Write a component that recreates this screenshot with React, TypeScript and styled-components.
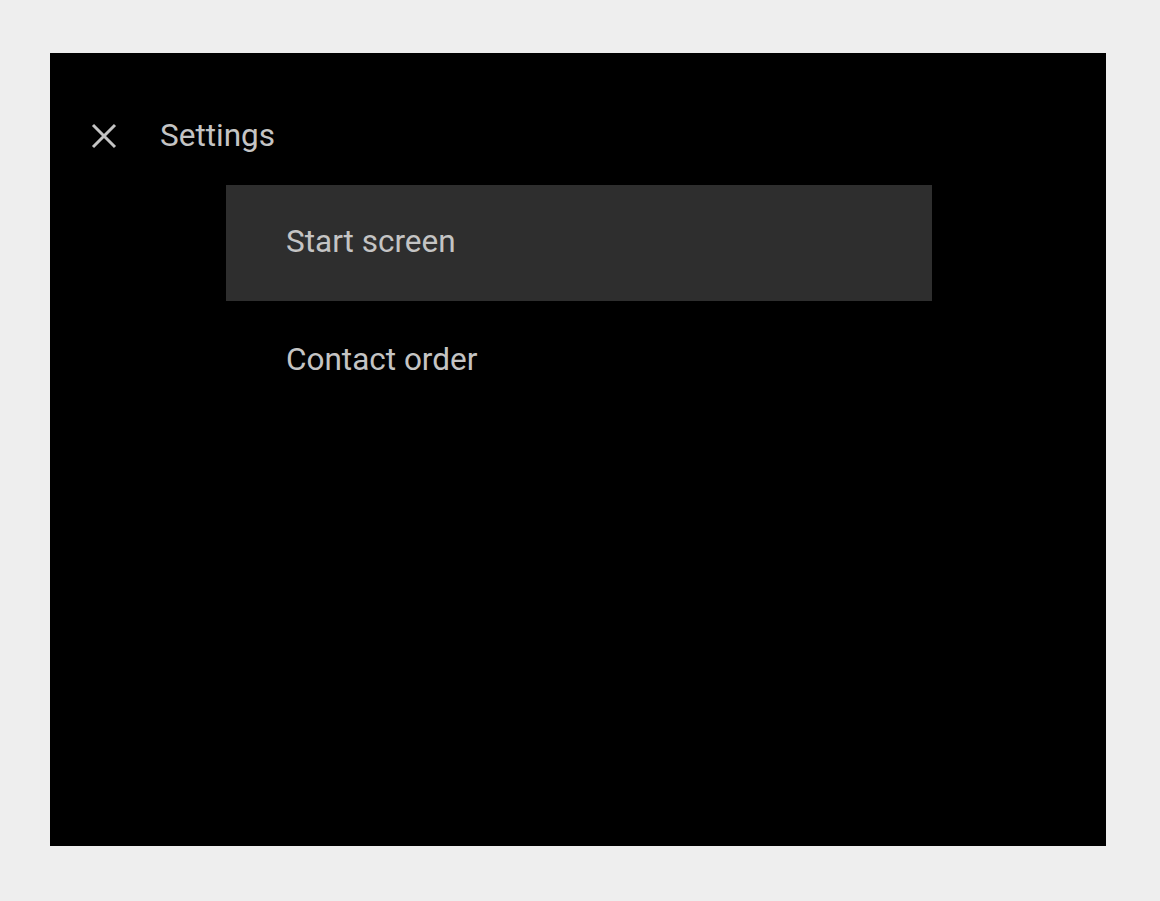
import React from 'react';
import styled, { createGlobalStyle } from 'styled-components';

const GlobalStyle = createGlobalStyle`
  body {
    margin: 0;
    background: #eeeeee;
    font-family: Roboto, "Liberation Sans", sans-serif;
  }
`;

const Page = styled.div`
  padding: 53px 0 0 50px;
  height: 901px;
  box-sizing: border-box;
`;

const Panel = styled.div`
  width: 1056px;
  height: 793px;
  background: #000;
  padding-top: 53px;
  box-sizing: border-box;
`;

const Header = styled.div`
  display: flex;
  align-items: center;
  height: 60px;
  padding-left: 41px;
  gap: 43px;
`;

const CloseButton = styled.button`
  width: 26px;
  height: 26px;
  padding: 0;
  border: none;
  background: none;
  display: flex;
  cursor: pointer;
`;

const Title = styled.h1`
  margin: 0 0 2px;
  font-size: 31.5px;
  font-weight: 400;
  color: #c4c4c4;
`;

const List = styled.ul`
  list-style: none;
  margin: 19px 0 0 176px;
  padding: 0;
  width: 706px;
`;

const Item = styled.li<{ $active?: boolean }>`
  height: 116px;
  display: flex;
  align-items: center;
  padding-left: 60px;
  font-size: 31.5px;
  color: #c4c4c4;
  background: ${(p) => (p.$active ? '#2e2e2e' : 'transparent')};
  padding-bottom: ${(p) => (p.$active ? '4px' : '0')};
  box-sizing: border-box;
`;

const items = ['Start screen', 'Contact order'];

export default function App() {
  return (
    <Page>
      <GlobalStyle />
      <Panel>
        <Header>
          <CloseButton aria-label="Close">
            <svg width="26" height="26" viewBox="0 0 26 26">
              <path d="M2 2L24 24M24 2L2 24" stroke="#c4c4c4" strokeWidth="3" />
            </svg>
          </CloseButton>
          <Title>Settings</Title>
        </Header>
        <List>
          {items.map((label, i) => (
            <Item key={label} $active={i === 0}>
              {label}
            </Item>
          ))}
        </List>
      </Panel>
    </Page>
  );
}
